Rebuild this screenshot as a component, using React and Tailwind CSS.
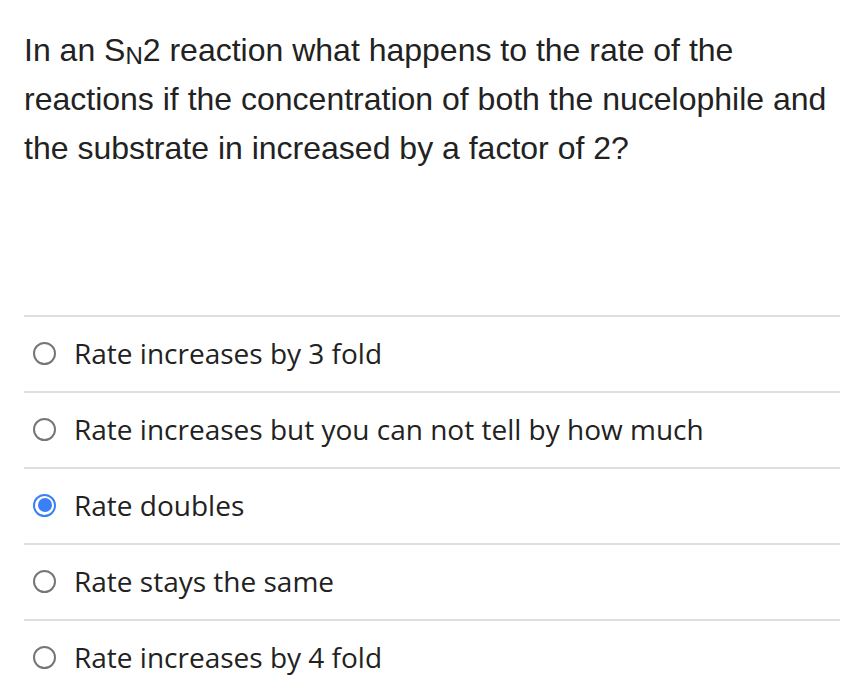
import React from "react";

const options = [
  { label: "Rate increases by 3 fold", checked: false },
  { label: "Rate increases but you can not tell by how much", checked: false },
  { label: "Rate doubles", checked: true },
  { label: "Rate stays the same", checked: false },
  { label: "Rate increases by 4 fold", checked: false },
];

function Radio({ checked }) {
  if (checked) {
    return (
      <span className="flex h-[23px] w-[23px] shrink-0 items-center justify-center rounded-full border-[2.5px] border-[#3a7ff6] bg-white">
        <span className="h-[14px] w-[14px] rounded-full bg-[#3a7ff6]" />
      </span>
    );
  }
  return (
    <span className="block h-[23px] w-[23px] shrink-0 rounded-full border-[2px] border-[#767676] bg-white" />
  );
}

export default function App() {
  return (
    <div className="min-h-[698px] w-[862px] bg-white">
      <div className="w-[862px] pl-[24px] pr-[22px] pt-[26px] text-[32px] leading-[49px] text-[#222] [font-family:'Liberation_Sans',Arial,sans-serif]">
        In an S<sub className="relative top-[3px] align-baseline text-[24px]">N</sub>2 reaction what happens to the rate of the reactions if the concentration of both the nucelophile and the substrate in increased by a factor of 2?
      </div>
      <div className="ml-[24px] mr-[22px] mt-[142px] [font-family:'Open_Sans',sans-serif]">
        {options.map((o, i) => (
          <div
            key={i}
            className="flex h-[76px] items-center gap-[18px] border-t-2 border-[#dedede] pb-[2px] pl-[9px]"
          >
            <Radio checked={o.checked} />
            <span className="text-[28px] text-[#222]">{o.label}</span>
          </div>
        ))}
      </div>
    </div>
  );
}
